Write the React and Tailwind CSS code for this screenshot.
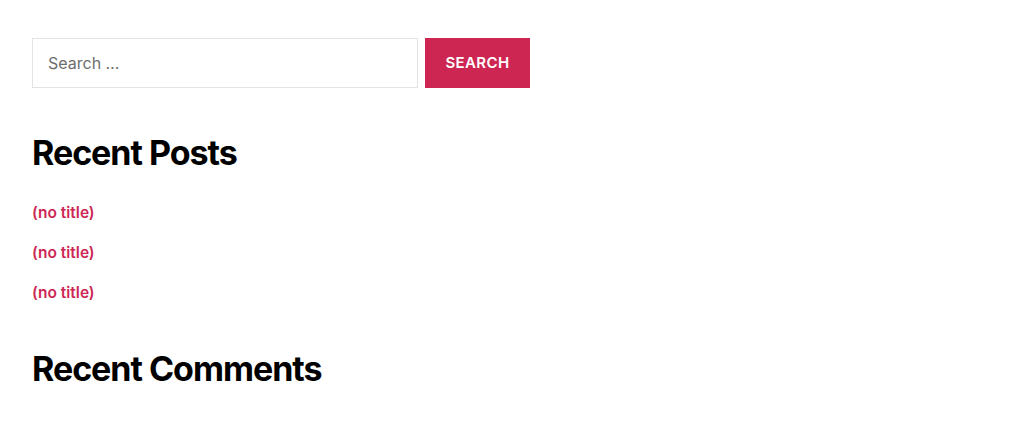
export default function App() {
  return (
    <div className="min-h-[433px] bg-white px-8 pt-[38px]" style={{ fontFamily: "Inter, 'Noto Sans', sans-serif" }}>
      <form className="flex gap-[7px]" onSubmit={(e) => e.preventDefault()}>
        <input
          type="search"
          placeholder="Search …"
          className="h-[50px] w-[386px] border border-[#e3e3e3] bg-white px-[15px] text-[16px] text-[#000] placeholder:text-[#6d6d6d] outline-none"
        />
        <button className="h-[50px] w-[105px] bg-[#cd2653] text-[15px] font-semibold uppercase tracking-[0.025em] text-white">
          Search
        </button>
      </form>
      <h2 className="mt-[45px] text-[34px] font-bold leading-[1.2] tracking-[-0.03em] text-black">Recent Posts</h2>
      <ul className="mt-[29px] flex flex-col gap-[20px]">
        {[0, 1, 2].map((i) => (
          <li key={i} className="text-[15.5px] font-semibold leading-[20px] text-[#cd2653]">
            <a href="#">(no title)</a>
          </li>
        ))}
      </ul>
      <h2 className="mt-[46px] text-[34px] font-bold leading-[1.2] tracking-[-0.03em] text-black">Recent Comments</h2>
    </div>
  );
}
